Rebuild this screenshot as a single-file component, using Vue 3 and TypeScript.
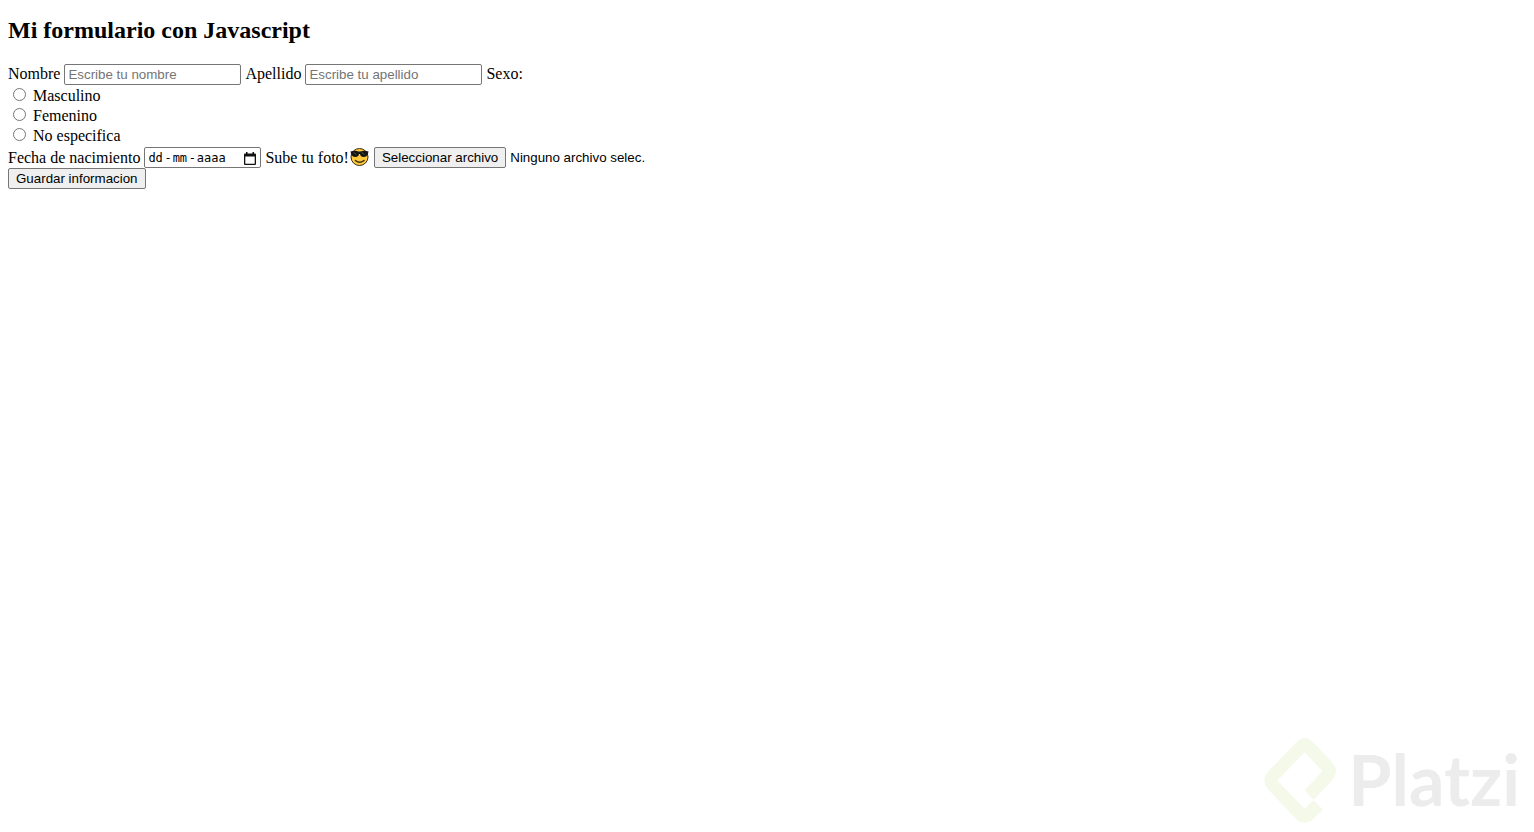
<script setup lang="ts">
import { ref } from 'vue'

const nombre = ref('')
const apellido = ref('')
const sexo = ref('')
const dia = ref('')
const mes = ref('')
const anio = ref('')
const archivo = ref('Ninguno archivo selec.')
const selector = ref<HTMLInputElement | null>(null)

const opciones: { id: string; texto: string }[] = [
  { id: 'masculino', texto: 'Masculino' },
  { id: 'femenino', texto: 'Femenino' },
  { id: 'no-especifica', texto: 'No especifica' },
]

function elegirArchivo(): void {
  selector.value?.click()
}

function actualizarArchivo(): void {
  archivo.value = selector.value?.files?.[0]?.name ?? 'Ninguno archivo selec.'
}
</script>

<template>
  <main class="page">
    <h2 class="title">Mi formulario con Javascript</h2>
    <form @submit.prevent>
      <div class="row">
        <label for="nombre">Nombre</label>
        <input id="nombre" v-model="nombre" class="field" type="text" placeholder="Escribe tu nombre" />
        <label for="apellido">Apellido</label>
        <input id="apellido" v-model="apellido" class="field" type="text" placeholder="Escribe tu apellido" />
        <span id="sexo">Sexo:</span>
      </div>
      <div role="radiogroup" aria-labelledby="sexo">
        <div v-for="o in opciones" :key="o.id" class="option">
          <input :id="o.id" v-model="sexo" class="radio" type="radio" name="sexo" :value="o.id" />
          <label :for="o.id">{{ o.texto }}</label>
        </div>
      </div>
      <div class="row row-end">
        <label for="dia">Fecha de nacimiento</label>
        <div class="date" role="group" aria-label="Fecha de nacimiento">
          <input id="dia" v-model="dia" class="part" type="text" placeholder="dd" maxlength="2" aria-label="Día" />
          <span>-</span>
          <input v-model="mes" class="part" type="text" placeholder="mm" maxlength="2" aria-label="Mes" />
          <span>-</span>
          <input v-model="anio" class="part year" type="text" placeholder="aaaa" maxlength="4" aria-label="Año" />
          <button class="calendar" type="button" aria-label="Abrir calendario">
            <svg viewBox="0 0 12 13" width="12" height="13" aria-hidden="true">
              <path d="M0 2.5Q0 1.5 1 1.5H2V0H3.5V1.5H8.5V0H10V1.5H11Q12 1.5 12 2.5V12Q12 13 11 13H1Q0 13 0 12ZM1.3 4.4V11.7H10.7V4.4Z" fill="#111" fill-rule="evenodd" />
            </svg>
          </button>
        </div>
        <label for="foto" class="photo">Sube tu foto!<svg class="emoji" viewBox="0 0 38 38" width="19" height="19" aria-hidden="true">
            <circle cx="19" cy="18" r="17" fill="#ffc83d" stroke="#3b2c10" stroke-width="2" />
            <path d="M1 7Q10 4 17 7H21Q28 4 37 7L36 11Q34 18 27 18Q21 18 20 12H18Q17 18 11 18Q4 18 2 11Z" fill="#151515" />
            <path d="M8 9L12 13M24 9L28 13" stroke="#666" stroke-width="2" />
            <path d="M11 25Q19 32 28 25" fill="none" stroke="#3b2c10" stroke-width="3" stroke-linecap="round" />
          </svg></label>
        <input id="foto" ref="selector" class="hidden-file" type="file" tabindex="-1" @change="actualizarArchivo" />
        <button class="btn" type="button" @click="elegirArchivo">Seleccionar archivo</button>
        <span class="file-name">{{ archivo }}</span>
      </div>
      <button class="btn" type="submit">Guardar informacion</button>
    </form>
    <div class="brand">
      <svg viewBox="0 0 216 256" width="72" height="85" aria-hidden="true">
        <path d="M98 11Q122 -11 146 11L207 75Q226 99 207 125L149 187L122 157L175 100L122 43L40 128L122 213L149 187L177 215L146 246Q122 265 98 246L10 153Q-10 128 10 103Z" fill="#f5f9ea" />
      </svg>
      <span class="brand-name">Platzi</span>
    </div>
  </main>
</template>

<style>
body {
  margin: 0;
  background: #fff;
}
</style>

<style scoped>
.page {
  padding: 16px 8px;
  font: 16px/20px "Liberation Serif", "Times New Roman", serif;
  color: #000;
}
.title {
  margin: 0 0 20px;
  font-size: 24px;
  line-height: 28px;
  font-weight: 700;
}
.row {
  display: flex;
  flex-wrap: wrap;
  align-items: flex-start;
  gap: 0 4px;
  min-height: 22px;
}
.row-end {
  align-items: flex-end;
}
.field,
.btn,
.file-name {
  font-family: "Liberation Sans", Arial, sans-serif;
  font-size: smaller;
}
.field {
  box-sizing: border-box;
  width: 177px;
  height: 21px;
  margin: 0;
  padding: 1px 3px;
  border: 1px solid #767676;
  border-radius: 2px;
  background: #fff;
}
.field::placeholder {
  color: #757575;
}
.option {
  display: flex;
  align-items: center;
  height: 20px;
}
.radio {
  width: 13px;
  height: 13px;
  margin: 0 7px 3px 5px;
}
.date {
  display: flex;
  align-items: center;
  box-sizing: border-box;
  width: 117px;
  height: 21px;
  padding: 1px 4px 0 2px;
  border: 1px solid #767676;
  border-radius: 2px;
  font: 12px/15px "DejaVu Sans Mono", monospace;
}
.part {
  box-sizing: border-box;
  width: 17px;
  height: 15px;
  margin: 0;
  padding: 0 1px;
  border: 0;
  background: none;
  font: inherit;
}
.part::placeholder {
  color: #000;
}
.year {
  width: 32px;
}
.calendar {
  display: flex;
  margin: 0 0 0 auto;
  padding: 0;
  border: 0;
  background: none;
}
.photo {
  display: flex;
  align-items: flex-start;
}
.emoji {
  margin-left: 1px;
  margin-right: 1px;
}
.hidden-file {
  display: none;
}
.btn {
  box-sizing: border-box;
  display: block;
  height: 21px;
  margin: 0;
  padding: 0 7px;
  border: 1px solid #767676;
  border-radius: 2px;
  background: #efefef;
  color: #000;
}
.brand {
  position: fixed;
  right: 14px;
  bottom: 9px;
  display: flex;
  align-items: flex-start;
  gap: 12px;
}
.brand-name {
  font: 700 70px/82px Lato, sans-serif;
  color: #ececec;
}
</style>
